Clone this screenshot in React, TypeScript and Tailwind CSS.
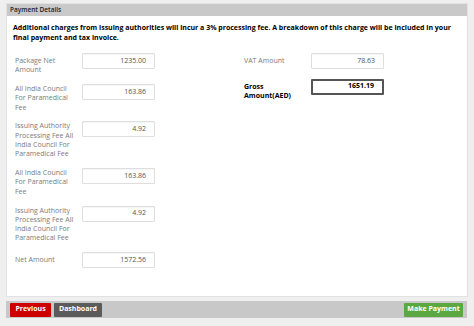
import React from "react";

type Row = { label: string; value: string; long?: boolean };

const leftRows: Row[] = [
  { label: "Package Net Amount", value: "1235.00" },
  { label: "All India Council For Paramedical Fee", value: "163.86", long: true },
  { label: "Issuing Authority Processing Fee All India Council For Paramedical Fee", value: "4.92", long: true },
  { label: "All India Council For Paramedical Fee", value: "163.86", long: true },
  { label: "Issuing Authority Processing Fee All India Council For Paramedical Fee", value: "4.92", long: true },
  { label: "Net Amount", value: "1572.56" },
];

function Field({ label, value, long, strong }: Row & { strong?: boolean }) {
  return (
    <div className="flex items-start mb-[9.5px]">
      <div
        className={
          "w-[67px] pr-[5px] leading-[9.3px] " +
          (long ? "mt-0 " : "mt-[3px] ") +
          (strong ? "font-bold text-black" : "text-[#7b7b7b]")
        }
      >
        {label}
      </div>
      <div
        className={
          "w-[73px] h-[16px] rounded-[1px] bg-white flex items-center justify-end pr-[8px] " +
          (strong
            ? "border-2 border-[#555555] font-bold text-black"
            : "border border-[#dedede] text-[#555555] shadow-[inset_0_1px_1px_rgba(0,0,0,0.04)]")
        }
      >
        {value}
      </div>
    </div>
  );
}

export default function App() {
  return (
    <div className="w-[474px] h-[326px] bg-[#efefef] overflow-hidden pt-[3px] font-['Open_Sans',sans-serif] text-[7px]">
      <div className="ml-[6px] w-[462px] h-[294px] bg-white border border-[#e2e2e2]">
        <div className="h-[12px] bg-[#c9c9c9] flex items-center pl-[3px] font-semibold text-[#222] text-[6.5px]">
          Payment Details
        </div>
        <p className="px-[6px] mt-[7px] font-bold text-black text-[7px] leading-[10px]">
          Additional charges from issuing authorities will incur a 3% processing fee. A breakdown of this charge will be included in your final payment and tax invoice.
        </p>
        <div className="grid grid-cols-[229px_1fr] pl-[8px] mt-[10px]">
          <div>
            {leftRows.map((r, i) => (
              <Field key={i} {...r} />
            ))}
          </div>
          <div>
            <Field label="VAT Amount" value="78.63" />
            <Field label="Gross Amount(AED)" value="1651.19" strong />
          </div>
        </div>
      </div>
      <div className="ml-[6px] w-[461px] mt-[4px] h-[17px] bg-[#c8c8c8] flex items-center justify-between px-[4px]">
        <div className="flex gap-[3px]">
          <button className="w-[41px] h-[14px] bg-[#cc0000] text-white font-bold text-[7px] rounded-[1px]">
            Previous
          </button>
          <button className="w-[48px] h-[14px] bg-[#5b5b5b] text-white font-bold text-[7px] rounded-[1px]">
            Dashboard
          </button>
        </div>
        <button className="w-[59px] h-[14px] bg-[#5ba843] text-white font-bold text-[7px] rounded-[1px]">
          Make Payment
        </button>
      </div>
    </div>
  );
}
